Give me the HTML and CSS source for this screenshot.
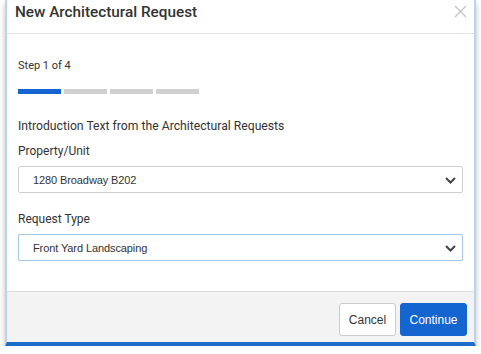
FILE: index.html
```html
<!DOCTYPE html>
<html lang="en">
<head>
    <meta charset="UTF-8">
    <meta name="viewport" content="width=device-width, initial-scale=1.0">
    <title>New Architectural Request</title>
    <link rel="stylesheet" href="styles.css">
</head>
<body>
    <div class="modal">
        <div class="modal-header">
            <h1 class="modal-title">New Architectural Request</h1>
            <button class="close" type="button" aria-label="Close">
                <svg width="13" height="13" viewBox="0 0 13 13">
                    <path d="M1 1 L12 12 M12 1 L1 12" stroke="#c4c4c4" stroke-width="1.4" fill="none"/>
                </svg>
            </button>
        </div>
        <div class="modal-body">
            <p class="step">Step 1 of 4</p>
            <div class="progress">
                <span class="bar active"></span>
                <span class="bar"></span>
                <span class="bar"></span>
                <span class="bar"></span>
            </div>
            <p class="intro">Introduction Text from the Architectural Requests</p>
            <label class="field-label" for="property">Property/Unit</label>
            <div class="select-wrap">
                <select id="property" class="select">
                    <option>1280 Broadway B202</option>
                </select>
                <svg class="chevron" width="11" height="7" viewBox="0 0 11 7">
                    <path d="M1 1 L5.5 5.5 L10 1" stroke="#444" stroke-width="2" fill="none"/>
                </svg>
            </div>
            <label class="field-label type-label" for="type">Request Type</label>
            <div class="select-wrap">
                <select id="type" class="select focused">
                    <option>Front Yard Landscaping</option>
                </select>
                <svg class="chevron" width="11" height="7" viewBox="0 0 11 7">
                    <path d="M1 1 L5.5 5.5 L10 1" stroke="#444" stroke-width="2" fill="none"/>
                </svg>
            </div>
        </div>
        <div class="modal-footer">
            <button class="btn btn-cancel" type="button">Cancel</button>
            <button class="btn btn-primary" type="button">Continue</button>
        </div>
    </div>
</body>
</html>
```

FILE: styles.css
```css
body {
    margin: 0;
    background-color: #ffffff;
    font-family: Roboto, "Liberation Sans", sans-serif;
    color: #333333;
}

.modal {
    margin: 0 5px;
    background-color: #ffffff;
    border-left: 2px solid #b9d5ee;
    border-right: 2px solid #b9d5ee;
    border-bottom: 4px solid #1c6cc8;
    box-shadow: 0 4px 6px rgba(0, 0, 0, 0.25);
}

.modal-header {
    height: 33px;
    border-bottom: 1px solid #e3e3e3;
    display: flex;
    justify-content: space-between;
    align-items: flex-start;
    padding: 0 7px 0 8px;
}

.modal-title {
    margin: 2px 0 0;
    font-size: 15.3px;
    font-weight: 500;
    line-height: 20px;
    color: #333333;
}

.close {
    border: none;
    background: none;
    padding: 0;
    margin-top: 5px;
    width: 13px;
    height: 13px;
}

.modal-body {
    padding: 25px 11px 30px;
}

.step {
    margin: 0;
    font-size: 11px;
    line-height: 14px;
}

.progress {
    display: flex;
    gap: 3px;
    margin-top: 16px;
}

.bar {
    width: 43px;
    height: 5px;
    background-color: #d0d0d0;
}

.bar.active {
    background-color: #1565d0;
}

.intro {
    margin: 25px 0 0;
    font-size: 12.2px;
    line-height: 14px;
}

.field-label {
    display: block;
    margin-top: 11px;
    font-size: 12px;
    line-height: 14px;
}

.type-label {
    margin-top: 19px;
}

.select-wrap {
    position: relative;
    margin-top: 8px;
}

.select {
    appearance: none;
    -webkit-appearance: none;
    display: block;
    width: 100%;
    height: 27px;
    padding: 0 30px 0 14px;
    border: 1px solid #cfcfcf;
    border-radius: 2px;
    background-color: #ffffff;
    font-family: "Liberation Sans", Arial, sans-serif;
    font-size: 11px;
    letter-spacing: -0.1px;
    color: #333333;
}

.select.focused {
    border-color: #a6c8e6;
    box-shadow: 0 0 1px rgba(100, 160, 220, 0.4);
}

.chevron {
    position: absolute;
    right: 7px;
    top: 11px;
    pointer-events: none;
}

.modal-footer {
    border-top: 1px solid #dcdcdc;
    background-color: #f3f3f3;
    height: 51px;
    display: flex;
    justify-content: flex-end;
    align-items: flex-start;
    gap: 4px;
    padding: 11px 7px 0 0;
    box-sizing: border-box;
}

.btn {
    height: 33px;
    border-radius: 3px;
    font-family: "Liberation Sans", Arial, sans-serif;
    font-size: 12px;
    cursor: pointer;
}

.btn-cancel {
    width: 57px;
    border: 1px solid #cccccc;
    background-color: #ffffff;
    color: #333333;
}

.btn-primary {
    width: 67px;
    border: 1px solid #1565d0;
    background-color: #1565d0;
    color: #ffffff;
}
```
